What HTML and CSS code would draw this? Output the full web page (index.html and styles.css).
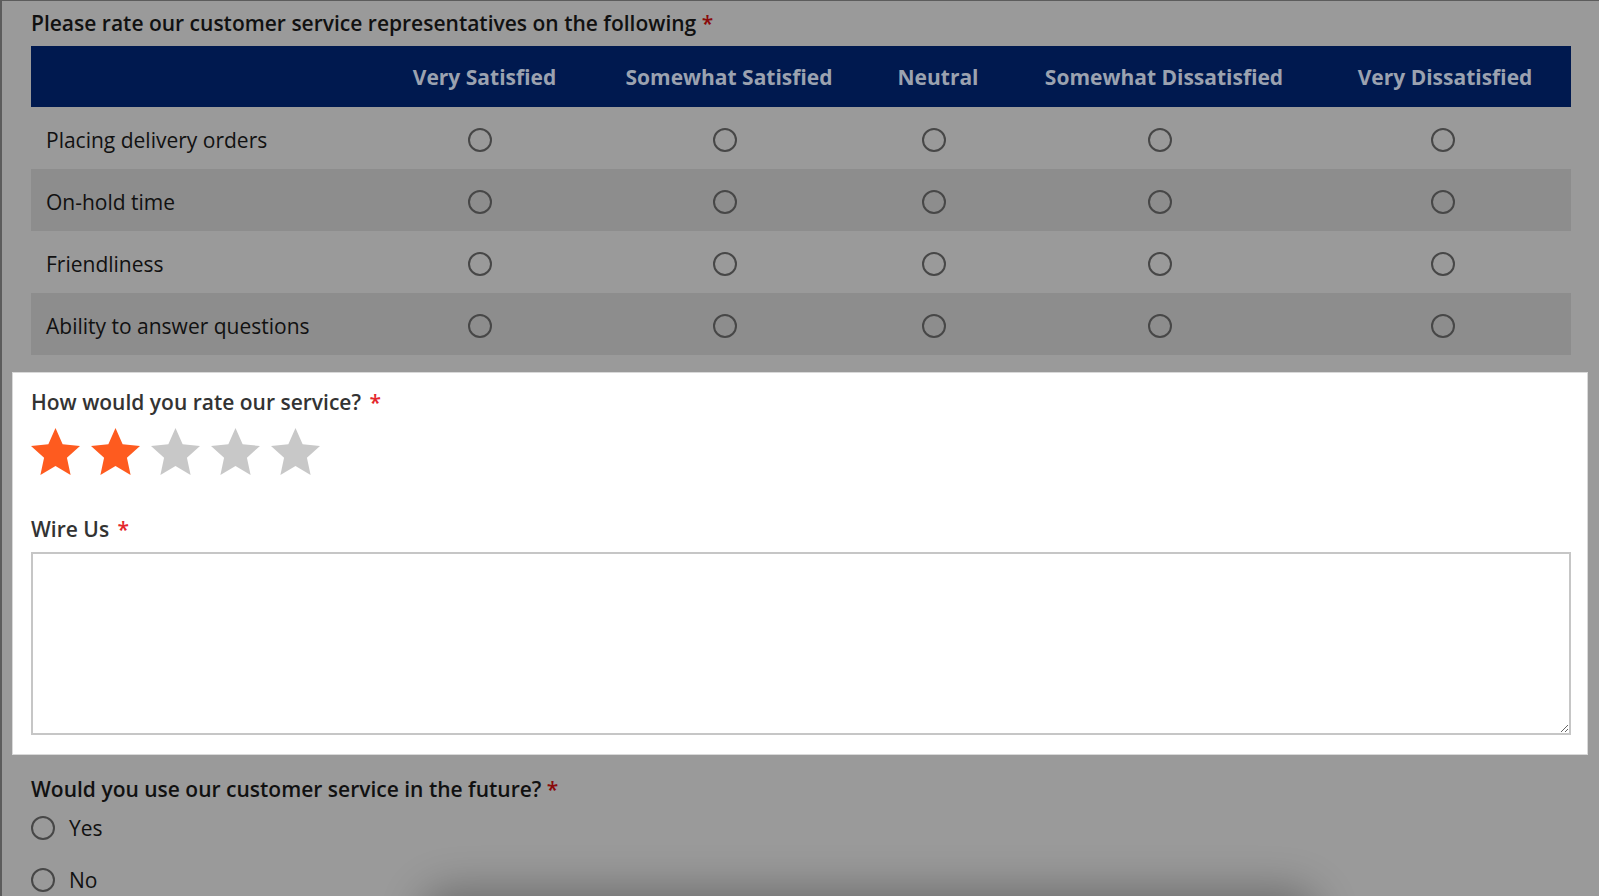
FILE: index.html
```
<!DOCTYPE html>
<html lang="en">

<head>
    <meta charset="UTF-8">
    <meta name="viewport" content="width=device-width, initial-scale=1.0">
    <title>Customer Service Survey</title>
    <link rel="stylesheet" href="styles.css">
</head>

<body>
    <div class="pagina">
        <div class="pregunta-titulo">Please rate our customer service representatives on the following <span class="req">*</span></div>

        <div class="matriz">
            <div class="matriz-fila cabecera">
                <div class="celda-label"></div>
                <div class="celda">Very Satisfied</div>
                <div class="celda">Somewhat Satisfied</div>
                <div class="celda">Neutral</div>
                <div class="celda">Somewhat Dissatisfied</div>
                <div class="celda">Very Dissatisfied</div>
            </div>
            <div class="matriz-fila">
                <div class="celda-label">Placing delivery orders</div>
                <div class="celda"><input type="radio" name="r1" class="radio"></div>
                <div class="celda"><input type="radio" name="r1" class="radio"></div>
                <div class="celda"><input type="radio" name="r1" class="radio"></div>
                <div class="celda"><input type="radio" name="r1" class="radio"></div>
                <div class="celda"><input type="radio" name="r1" class="radio"></div>
            </div>
            <div class="matriz-fila par">
                <div class="celda-label">On-hold time</div>
                <div class="celda"><input type="radio" name="r2" class="radio"></div>
                <div class="celda"><input type="radio" name="r2" class="radio"></div>
                <div class="celda"><input type="radio" name="r2" class="radio"></div>
                <div class="celda"><input type="radio" name="r2" class="radio"></div>
                <div class="celda"><input type="radio" name="r2" class="radio"></div>
            </div>
            <div class="matriz-fila">
                <div class="celda-label">Friendliness</div>
                <div class="celda"><input type="radio" name="r3" class="radio"></div>
                <div class="celda"><input type="radio" name="r3" class="radio"></div>
                <div class="celda"><input type="radio" name="r3" class="radio"></div>
                <div class="celda"><input type="radio" name="r3" class="radio"></div>
                <div class="celda"><input type="radio" name="r3" class="radio"></div>
            </div>
            <div class="matriz-fila par">
                <div class="celda-label">Ability to answer questions</div>
                <div class="celda"><input type="radio" name="r4" class="radio"></div>
                <div class="celda"><input type="radio" name="r4" class="radio"></div>
                <div class="celda"><input type="radio" name="r4" class="radio"></div>
                <div class="celda"><input type="radio" name="r4" class="radio"></div>
                <div class="celda"><input type="radio" name="r4" class="radio"></div>
            </div>
        </div>

        <!-- bloque activo (resaltado sobre el overlay) -->
        <div class="tarjeta">
            <div class="tarjeta-label">How would you rate our service? <span class="req-rojo">*</span></div>
            <div class="estrellas">
                <svg class="estrella on" viewBox="0 0 24 23"><polygon points="12 0 15.5 8 24 8.8 17.6 14.5 19.4 23 12 18.6 4.6 23 6.4 14.5 0 8.8 8.5 8"/></svg>
                <svg class="estrella on" viewBox="0 0 24 23"><polygon points="12 0 15.5 8 24 8.8 17.6 14.5 19.4 23 12 18.6 4.6 23 6.4 14.5 0 8.8 8.5 8"/></svg>
                <svg class="estrella" viewBox="0 0 24 23"><polygon points="12 0 15.5 8 24 8.8 17.6 14.5 19.4 23 12 18.6 4.6 23 6.4 14.5 0 8.8 8.5 8"/></svg>
                <svg class="estrella" viewBox="0 0 24 23"><polygon points="12 0 15.5 8 24 8.8 17.6 14.5 19.4 23 12 18.6 4.6 23 6.4 14.5 0 8.8 8.5 8"/></svg>
                <svg class="estrella" viewBox="0 0 24 23"><polygon points="12 0 15.5 8 24 8.8 17.6 14.5 19.4 23 12 18.6 4.6 23 6.4 14.5 0 8.8 8.5 8"/></svg>
            </div>

            <div class="tarjeta-label wire">Wire Us <span class="req-rojo">*</span></div>
            <textarea class="caja-texto"></textarea>
        </div>

        <div class="pregunta-titulo futuro">Would you use our customer service in the future? <span class="req">*</span></div>
        <label class="opcion"><input type="radio" name="futuro" class="radio"> Yes</label>
        <label class="opcion no"><input type="radio" name="futuro" class="radio"> No</label>
    </div>

    <div class="sombra-abajo"></div>
</body>

</html>
```

FILE: styles.css
```
html,
body {
    height: 100%;
    overflow: hidden;
}

body {
    margin: 0;
    font-family: "Open Sans", Arial, sans-serif;
    background-color: #9a9a9a;
    border-left: 2px solid #5c5c5c;
    border-top: 1px solid #5c5c5c;
    box-sizing: border-box;
    position: relative;
}

.pagina {
    padding: 8px 28px 0 29px;
}

.pregunta-titulo {
    font-size: 21px;
    font-weight: 600;
    line-height: 28px;
    color: #111;
    margin-bottom: 9px;
}

.req {
    color: #8a0a0a;
}

.req-rojo {
    color: #e4262c;
    margin-left: 3px;
}

.matriz-fila {
    display: grid;
    grid-template-columns: 347px 213px 276px 142px 310px 252px;
    height: 62px;
    align-items: center;
}

.matriz-fila.cabecera {
    height: 61px;
    background-color: #00194f;
    color: #9ba2b0;
    font-weight: 700;
    font-size: 21px;
}

.matriz-fila.par {
    background-color: #8d8d8d;
}

.celda-label {
    padding-left: 15px;
    font-size: 21px;
    color: #111;
}

.matriz-fila:not(.cabecera) .celda-label {
    padding-top: 3px;
}

.celda {
    text-align: center;
}

.matriz-fila:not(.cabecera) .celda {
    padding-right: 9px;
    padding-top: 3px;
    display: flex;
    justify-content: center;
}

.matriz-fila:not(.cabecera) .celda:last-child {
    padding-right: 4px;
}

.radio {
    appearance: none;
    -webkit-appearance: none;
    width: 24px;
    height: 24px;
    margin: 0;
    border: 2px solid #474747;
    border-radius: 50%;
    background: transparent;
    box-sizing: border-box;
}

.tarjeta {
    background-color: white;
    margin: 17px -17px 0 -19px;
    padding: 15px 16px 19px 18px;
    border: 1px solid #d9d9d9;
}

.tarjeta-label {
    font-size: 21px;
    font-weight: 600;
    line-height: 28px;
    color: #333;
}

.tarjeta-label.wire {
    margin-top: 40px;
}

.estrellas {
    display: flex;
    gap: 11px;
    margin-top: 12px;
    height: 47px;
}

.estrella {
    width: 49px;
    height: 47px;
    fill: #c8c8c8;
}

.estrella.on {
    fill: #fe5b1f;
}

.caja-texto {
    display: block;
    width: 100%;
    height: 183px;
    margin-top: 9px;
    border: 2px solid #c6c6c6;
    box-sizing: border-box;
    resize: vertical;
    font-family: inherit;
}

.pregunta-titulo.futuro {
    margin-top: 20px;
    margin-bottom: 0;
}

.opcion {
    display: flex;
    align-items: center;
    gap: 14px;
    font-size: 21px;
    line-height: 28px;
    color: #111;
    margin-top: 11px;
}

.opcion.no {
    margin-top: 24px;
}

.sombra-abajo {
    position: absolute;
    left: 430px;
    top: 905px;
    width: 875px;
    height: 80px;
    border-radius: 20px;
    box-shadow: 0 -6px 40px 12px rgba(0, 0, 0, 0.28);
}
```
